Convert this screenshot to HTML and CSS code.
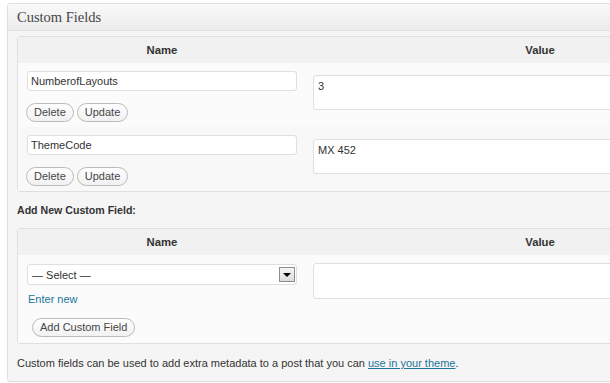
FILE: index.html
```html
<!DOCTYPE html>
<html>
<head>
<meta charset="utf-8">
<link rel="stylesheet" href="styles.css">
</head>
<body>
<div class="postbox">
  <h3 class="box-title">Custom Fields</h3>
  <div class="inside">
    <table class="meta-table">
      <thead>
        <tr><th class="col-name">Name</th><th class="col-value">Value</th></tr>
      </thead>
      <tbody>
        <tr class="row-a">
          <td class="cell-left">
            <div class="text-input">NumberofLayouts</div>
            <div class="btn-row"><span class="btn">Delete</span><span class="btn">Update</span></div>
          </td>
          <td class="cell-right"><div class="text-area">3</div></td>
        </tr>
        <tr class="row-b">
          <td class="cell-left">
            <div class="text-input">ThemeCode</div>
            <div class="btn-row"><span class="btn">Delete</span><span class="btn">Update</span></div>
          </td>
          <td class="cell-right"><div class="text-area">MX 452</div></td>
        </tr>
      </tbody>
    </table>

    <p class="add-title">Add New Custom Field:</p>

    <table class="meta-table">
      <thead>
        <tr><th class="col-name">Name</th><th class="col-value">Value</th></tr>
      </thead>
      <tbody>
        <tr class="row-a">
          <td class="cell-left new-left">
            <div class="fake-select"><span class="sel-text">— Select —</span><span class="sel-arrow"><span class="tri"></span></span></div>
            <a class="enter-new">Enter new</a>
            <div class="add-row"><span class="btn">Add Custom Field</span></div>
          </td>
          <td class="cell-right new-right"><div class="text-area tall"></div></td>
        </tr>
      </tbody>
    </table>

    <p class="note">Custom fields can be used to add extra metadata to a post that you can <a class="link">use in your theme</a>.</p>
  </div>
</div>
</body>
</html>
```

FILE: styles.css
```css
html, body {
  margin: 0;
  padding: 0;
  overflow: hidden;
  background: #ffffff;
}
body {
  font-family: "Liberation Sans", Arial, sans-serif;
  font-size: 11px;
  color: #333;
}
.postbox {
  margin: 3px 0 0 7px;
  width: 800px;
  border: 1px solid #dfdfdf;
  border-radius: 3px;
  background: #f5f5f5;
  box-shadow: inset 0 1px 0 #fff;
}
.box-title {
  margin: 0;
  height: 26px;
  line-height: 26px;
  padding: 0 9px;
  font-family: "Liberation Serif", Georgia, serif;
  font-weight: normal;
  font-size: 14.5px;
  color: #464646;
  background: linear-gradient(#f9f9f9, #ececec);
  border-bottom: 1px solid #dfdfdf;
  border-radius: 3px 3px 0 0;
}
.inside {
  padding: 5px 0 10px 9px;
}
.meta-table {
  border: 1px solid #dfdfdf;
  border-spacing: 0;
  border-radius: 3px;
  background: #f9f9f9;
  table-layout: fixed;
  width: 758px;
}
.meta-table th {
  background: #f1f1f1;
  height: 26px;
  padding: 0;
  font-weight: bold;
  font-size: 11.3px;
  color: #333;
  text-align: center;
}
.col-name { width: 288px; }
.col-value { width: 468px; }
.row-a td { background: #fbfbfb; }
.row-b td { background: #f8f8f8; }
.cell-left {
  vertical-align: top;
  padding: 8px 9px 5px 9px;
}
.cell-right {
  vertical-align: top;
  padding: 12px 0 0 7px;
}
.text-input {
  box-sizing: border-box;
  width: 270px;
  height: 20px;
  line-height: 18px;
  padding: 0 3px;
  border: 1px solid #dfdfdf;
  border-radius: 3px;
  background: #fff;
  color: #333;
}
.text-area {
  box-sizing: border-box;
  width: 440px;
  height: 35px;
  padding: 3px 4px;
  line-height: 15px;
  border: 1px solid #dfdfdf;
  border-radius: 3px;
  background: #fff;
  color: #333;
}
.text-area.tall { height: 36px; }
.btn-row {
  display: flex;
  gap: 3px;
  margin-top: 12px;
  margin-left: -1px;
}
.btn {
  display: inline-block;
  box-sizing: border-box;
  height: 19px;
  line-height: 17px;
  padding: 0 7px;
  border: 1px solid #bbb;
  border-radius: 11px;
  background: linear-gradient(#fefefe, #f1f1f1);
  color: #464646;
  font-size: 11px;
}
.add-title {
  margin: 11px 0 10px 0;
  line-height: 15px;
  font-weight: bold;
  font-size: 10.6px;
  color: #333;
}
.new-left { padding-bottom: 6px; }
.new-right { padding-top: 8px; }
.fake-select {
  box-sizing: border-box;
  width: 270px;
  height: 21px;
  margin-top: 1px;
  border: 1px solid #dfdfdf;
  border-radius: 3px;
  background: #fff;
  display: flex;
  align-items: center;
  justify-content: space-between;
  padding: 0 1px 0 4px;
}
.sel-text { color: #333; }
.sel-arrow {
  box-sizing: border-box;
  width: 16px;
  height: 15px;
  border: 1px solid #8c8c8c;
  background: linear-gradient(#f6f6f6, #dcdcdc);
  display: flex;
  align-items: center;
  justify-content: center;
}
.tri {
  width: 0;
  height: 0;
  border-left: 4px solid transparent;
  border-right: 4px solid transparent;
  border-top: 4px solid #000;
}
.enter-new {
  display: block;
  margin-top: 7px;
  margin-left: 1px;
  line-height: 15px;
  color: #21759b;
}
.add-row {
  display: flex;
  margin-top: 11px;
  margin-left: 5px;
}
.note {
  margin: 12px 0 0 0;
  line-height: 15px;
  color: #333;
}
.link {
  color: #21759b;
  text-decoration: underline;
}
```
